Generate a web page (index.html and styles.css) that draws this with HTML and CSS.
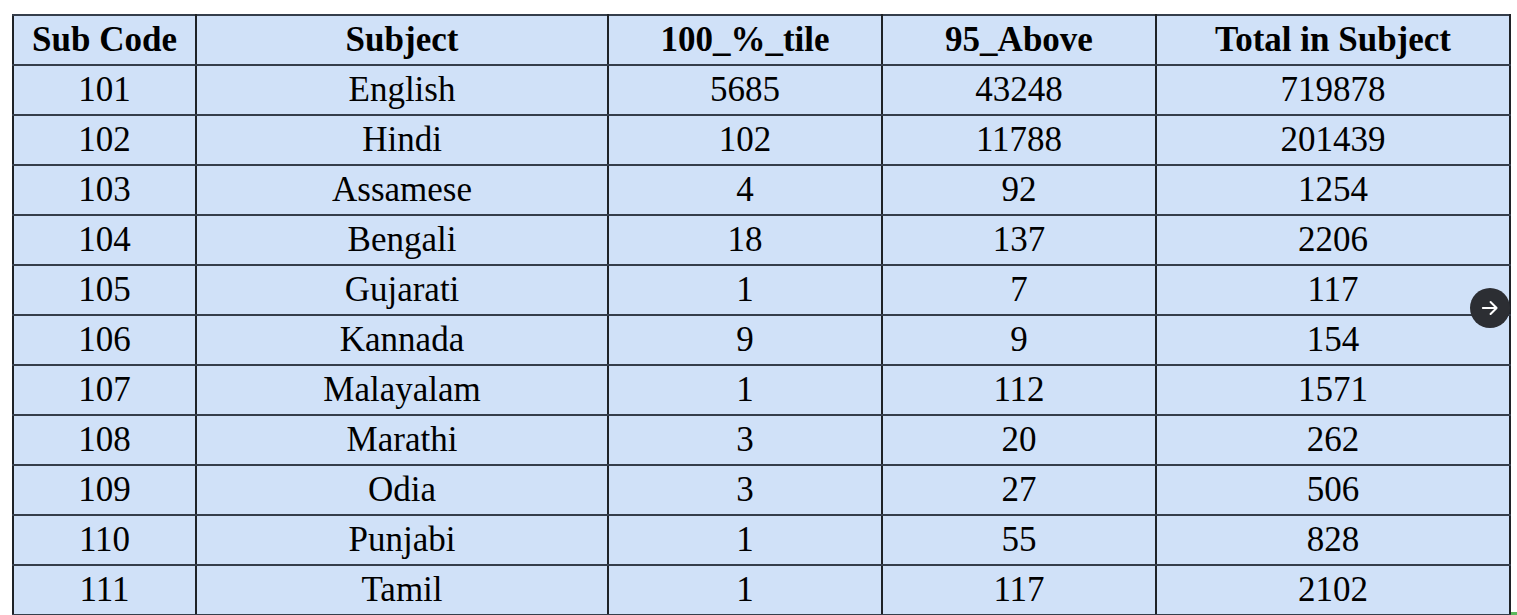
FILE: index.html
```html
<!DOCTYPE html>
<html>
<head>
<meta charset="utf-8">
<link rel="stylesheet" href="styles.css">
</head>
<body>
<div class="wrap">
<table class="grid">
<colgroup>
<col class="c1"><col class="c2"><col class="c3"><col class="c4"><col class="c5">
</colgroup>
<thead>
<tr><th>Sub Code</th><th>Subject</th><th>100_%_tile</th><th>95_Above</th><th>Total in Subject</th></tr>
</thead>
<tbody>
<tr><td>101</td><td>English</td><td>5685</td><td>43248</td><td>719878</td></tr>
<tr><td>102</td><td>Hindi</td><td>102</td><td>11788</td><td>201439</td></tr>
<tr><td>103</td><td>Assamese</td><td>4</td><td>92</td><td>1254</td></tr>
<tr><td>104</td><td>Bengali</td><td>18</td><td>137</td><td>2206</td></tr>
<tr><td>105</td><td>Gujarati</td><td>1</td><td>7</td><td>117</td></tr>
<tr><td>106</td><td>Kannada</td><td>9</td><td>9</td><td>154</td></tr>
<tr><td>107</td><td>Malayalam</td><td>1</td><td>112</td><td>1571</td></tr>
<tr><td>108</td><td>Marathi</td><td>3</td><td>20</td><td>262</td></tr>
<tr><td>109</td><td>Odia</td><td>3</td><td>27</td><td>506</td></tr>
<tr><td>110</td><td>Punjabi</td><td>1</td><td>55</td><td>828</td></tr>
<tr><td>111</td><td>Tamil</td><td>1</td><td>117</td><td>2102</td></tr>
</tbody>
</table>
<button class="next" aria-label="next">
<svg width="22" height="22" viewBox="0 0 20 20"><path d="M3.5 10h12.5M10.5 4.5L16 10l-5.5 5.5" fill="none" stroke="#fff" stroke-width="1.8" stroke-linecap="round" stroke-linejoin="round"/></svg>
</button>
<div class="edge"></div>
</div>
</body>
</html>
```
FILE: styles.css
```css
html, body {
  margin: 0;
  padding: 0;
  background: #fff;
  overflow: hidden;
}
.wrap {
  position: relative;
  padding: 14px 0 0 12px;
  width: 1497px;
}
.grid {
  border-collapse: collapse;
  table-layout: fixed;
  width: 1497px;
  background: #d0e1f8;
  font-family: "Liberation Serif", "Times New Roman", serif;
  font-size: 35px;
  color: #000;
}
.c1 { width: 183px; }
.c2 { width: 412px; }
.c3 { width: 274px; }
.c4 { width: 274px; }
.c5 { width: 354px; }
.grid th, .grid td {
  border-left: 2px solid #1e2227;
  border-right: 2px solid #1e2227;
  border-top: 2px solid #353e4b;
  border-bottom: 2px solid #353e4b;
  height: 48px;
  padding: 0;
  text-align: center;
  vertical-align: middle;
  line-height: 48px;
  white-space: nowrap;
}
.grid th {
  font-weight: bold;
}
.next {
  position: absolute;
  left: 1470px;
  top: 288px;
  width: 40px;
  height: 40px;
  border-radius: 50%;
  border: none;
  background: #2c2e33;
  padding: 0;
  display: flex;
  align-items: center;
  justify-content: center;
}
.edge {
  position: absolute;
  left: 1511px;
  top: 612px;
  width: 6px;
  height: 3px;
  background: #5cb85c;
}
```
